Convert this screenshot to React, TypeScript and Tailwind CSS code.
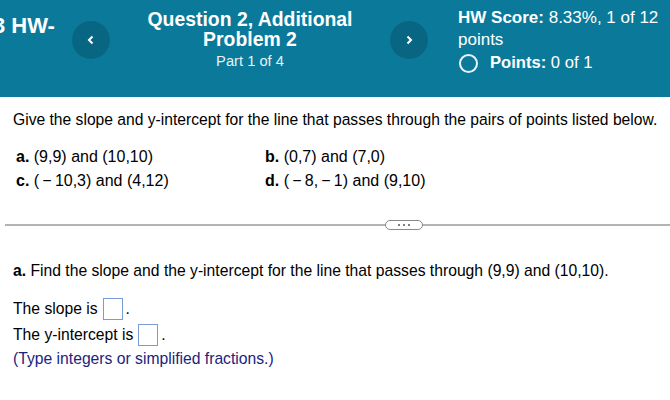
export default function App() {
  return (
    <div className="w-[670px] h-[400px] bg-white overflow-hidden" style={{ fontFamily: '"Liberation Sans", Arial, sans-serif' }}>
      <div className="h-[97px] bg-[#0b7a9a] flex items-start text-white">
        <div className="w-[79px] shrink-0 pt-[14px] -ml-[7px] text-[22px] font-bold leading-[24px] whitespace-nowrap">3 HW-</div>
        <div className="w-[38px] h-[38px] mt-[21px] rounded-full bg-[#096682] flex items-center justify-center shrink-0">
          <svg width="10" height="12" viewBox="0 0 10 12"><path d="M6.5 2.5 L3 6 L6.5 9.5" stroke="white" strokeWidth="2" fill="none" /></svg>
        </div>
        <div className="w-[280px] shrink-0 pt-[9px] text-center">
          <div className="text-[19.4px] font-bold leading-[20px]">Question 2, Additional</div>
          <div className="text-[19.4px] font-bold leading-[20px]">Problem 2</div>
          <div className="text-[14.7px] leading-[18px] mt-[3px] text-[#e6f2f6]">Part 1 of 4</div>
        </div>
        <div className="w-[38px] h-[38px] mt-[21px] rounded-full bg-[#096682] flex items-center justify-center shrink-0">
          <svg width="10" height="12" viewBox="0 0 10 12"><path d="M3.5 2.5 L7 6 L3.5 9.5" stroke="white" strokeWidth="2" fill="none" /></svg>
        </div>
        <div className="pl-[30px] pt-[7px] text-[17px] leading-[22px] whitespace-nowrap">
          <div><span className="font-bold">HW Score:</span> 8.33%, 1 of 12</div>
          <div>points</div>
          <div className="flex items-center mt-[1px]">
            <span className="w-[19px] h-[19px] rounded-full border-[2.5px] border-[#e8f4f8] mr-[12px] ml-[1px]"></span>
            <span className="text-[16.6px]"><span className="font-bold">Points:</span> 0 of 1</span>
          </div>
        </div>
      </div>
      <div className="px-[13px] text-black">
        <div className="pt-[13px] text-[15.65px] leading-[20px] whitespace-nowrap">Give the slope and y-intercept for the line that passes through the pairs of points listed below.</div>
        <div className="grid grid-cols-[249px_1fr] pl-[3px] mt-[15px] text-[16px] leading-[24px]">
          <div><span className="font-bold">a.</span> (9,9) and (10,10)</div>
          <div><span className="font-bold">b.</span> (0,7) and (7,0)</div>
          <div><span className="font-bold">c.</span> ({'\u2009'}−{'\u2009'}10,3) and (4,12)</div>
          <div><span className="font-bold">d.</span> ({'\u2009'}−{'\u2009'}8,{'\u2009'}−{'\u2009'}1) and (9,10)</div>
        </div>
      </div>
      <div className="relative mt-[27px] ml-[5px] h-[10px] flex items-center">
        <div className="w-full h-[2px] bg-[#b3b3b3]"></div>
        <div className="absolute left-[380px] top-0 w-[38px] h-[10px] rounded-full border border-[#8a8a8a] bg-white flex items-center justify-center gap-[3px]">
          <span className="w-[2px] h-[2px] bg-[#555] rounded-full"></span>
          <span className="w-[2px] h-[2px] bg-[#555] rounded-full"></span>
          <span className="w-[2px] h-[2px] bg-[#555] rounded-full"></span>
        </div>
      </div>
      <div className="px-[13px] text-black text-[15.7px]">
        <div className="mt-[31px] leading-[20px] whitespace-nowrap"><span className="font-bold">a.</span> Find the slope and the y-intercept for the line that passes through (9,9) and (10,10).</div>
        <div className="mt-[15px] leading-[26px] flex items-center">The slope is<span className="inline-block w-[20px] h-[22px] border border-[#7a9bd6] ml-[5px] mr-[3px]"></span>.</div>
        <div className="leading-[26px] flex items-center">The y-intercept is<span className="inline-block w-[20px] h-[22px] border border-[#7a9bd6] ml-[5px] mr-[3px]"></span>.</div>
        <div className="leading-[22px] text-[#1a237e]">(Type integers or simplified fractions.)</div>
      </div>
    </div>
  );
}
